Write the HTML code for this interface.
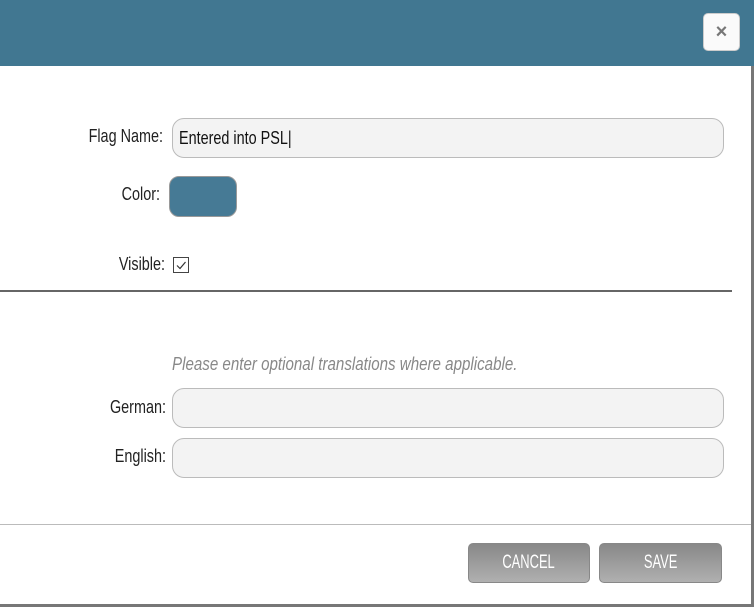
<!DOCTYPE html>
<html><head><style>
*{margin:0;padding:0;box-sizing:border-box}
body{width:754px;height:607px;background:#fff;position:relative;overflow:hidden;font-family:"Liberation Sans",sans-serif;color:#222}
.hdr{position:absolute;left:0;top:0;width:754px;height:66px;background:#417791}
.close{position:absolute;left:703px;top:13px;width:37px;height:38px;background:#fafafa;border:1px solid #ccc;border-radius:5px;color:#777;font-weight:bold;font-size:20px;text-align:center;line-height:36px}
.rb{position:absolute;left:751px;top:66px;width:3px;height:541px;background:#777}
.bb{position:absolute;left:0;top:604px;width:754px;height:3px;background:#777}
.lbl{position:absolute;font-size:18px;text-align:right;width:160px;transform:scaleX(0.8);transform-origin:right center}
.inp{position:absolute;left:172px;width:552px;height:40px;background:#f3f3f3;border:1px solid #bbb;border-radius:12px;font-size:18px;padding-left:6px;line-height:38px;color:#111}
.inp span{display:inline-block;transform:scaleX(0.8);transform-origin:left center}
.sw{position:absolute;left:169px;top:176px;width:68px;height:41px;background:#467a95;border:1px solid #999;border-radius:10px}
.cb{position:absolute;left:173px;top:257px;width:16px;height:16px;border:1px solid #444}
.sep{position:absolute;left:0;top:290px;width:732px;height:2px;background:#666}
.note{position:absolute;left:172px;top:354px;font-style:italic;color:#888;font-size:18px;transform:scaleX(0.84);transform-origin:left center;white-space:nowrap}
.fl{position:absolute;left:0;top:524px;width:751px;height:1px;background:#bbb}
.btn{position:absolute;top:543px;height:40px;border:1px solid #888;border-radius:5px;background:linear-gradient(#888,#b0b0b0);color:#fff;font-size:19px;text-align:center;line-height:38px}
.btn span{display:inline-block;transform:scaleX(0.68)}
</style></head><body>
<div class="hdr"></div>
<div class="close">×</div>
<div class="lbl" style="left:3px;top:126px">Flag Name:</div>
<div class="inp" style="top:118px"><span>Entered into PSL|</span></div>
<div class="lbl" style="left:0;top:184px">Color:</div>
<div class="sw"></div>
<div class="lbl" style="left:5px;top:254px">Visible:</div>
<div class="cb"><svg width="14" height="14" viewBox="0 0 14 14"><path d="M3 7.5L6 10.5L11.5 4" stroke="#333" stroke-width="1.2" fill="none"/></svg></div>
<div class="sep"></div>
<div class="note">Please enter optional translations where applicable.</div>
<div class="lbl" style="left:6px;top:397px">German:</div>
<div class="inp" style="top:388px"></div>
<div class="lbl" style="left:6px;top:446px">English:</div>
<div class="inp" style="top:438px"></div>
<div class="fl"></div>
<div class="btn" style="left:468px;width:122px"><span>CANCEL</span></div>
<div class="btn" style="left:599px;width:123px"><span>SAVE</span></div>
<div class="rb"></div><div class="bb"></div>
</body></html>
